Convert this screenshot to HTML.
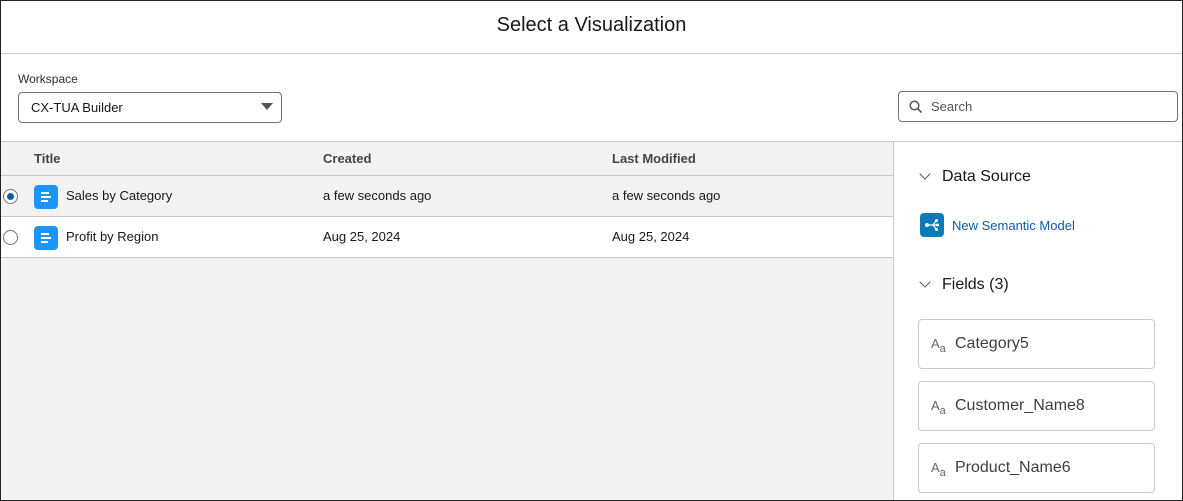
<!DOCTYPE html>
<html><head><style>
*{box-sizing:border-box;margin:0;padding:0}
body{width:1183px;height:501px;font-family:"Liberation Sans",sans-serif;color:#181818;background:#fff;position:relative;overflow:hidden}
.frame{position:absolute;inset:0;border:1px solid #222;}
.hdr{position:absolute;left:0;top:0;width:1183px;height:54px;border-bottom:1px solid #c9c9c9;text-align:center;font-size:20px;line-height:51px}
.lbl{position:absolute;left:18px;top:72px;font-size:12px;color:#2e2e2e}
.sel{position:absolute;left:18px;top:92px;width:264px;height:31px;border:1px solid #747474;border-radius:4px;font-size:13px;line-height:29px;padding-left:12px}
.sel:after{content:"";position:absolute;right:8px;top:10px;border-left:6px solid transparent;border-right:6px solid transparent;border-top:7px solid #555}
.srch{position:absolute;left:898px;top:91px;width:280px;height:31px;border:1px solid #747474;border-radius:4px;font-size:13px;line-height:29px;padding-left:32px;color:#555}
.left{position:absolute;left:1px;top:141px;width:893px;height:359px;background:#f3f3f3;border-top:1px solid #c9c9c9;border-right:1px solid #c9c9c9}
.right{position:absolute;left:894px;top:141px;width:288px;height:359px;border-top:1px solid #c9c9c9;background:#fff}
.th{position:absolute;top:0;height:34px;width:892px;border-bottom:1px solid #c9c9c9;font-size:13px;font-weight:bold;color:#444}
.th span{position:absolute;top:9px}
.row span{position:absolute;top:12px}
.row{position:absolute;left:0;width:892px;height:41px;border-bottom:1px solid #c9c9c9;font-size:13px}
.radio{position:absolute;left:2px;top:13px;width:15px;height:15px;border:1px solid #747474;border-radius:50%;background:#fff}
.ico{position:absolute;left:33px;top:9px;width:24px;height:24px;background:#1b96ff;border-radius:4px}
.ico i{position:absolute;left:7px;height:2px;background:#fff}
.sec{position:absolute;left:48px;font-size:16px}
.chev{position:absolute;left:27px;width:8px;height:8px;border-right:1.3px solid #555;border-bottom:1.3px solid #555;transform:rotate(45deg)}
.fld{position:absolute;left:24px;width:237px;height:50px;border:1px solid #c9c9c9;border-radius:4px;font-size:16px;color:#3e3e3e;line-height:48px;padding-left:36px}
.fld b{position:absolute;left:12px;top:0;font-weight:normal;font-size:13px;color:#666}
.fld b small{font-size:11px;position:relative;top:4px}
</style></head><body>
<div class="hdr">Select a Visualization</div>
<div class="lbl">Workspace</div>
<div class="sel">CX-TUA Builder</div>
<div class="srch"><svg style="position:absolute;left:10px;top:8px" width="14" height="14" viewBox="0 0 14 14"><circle cx="5.5" cy="5.5" r="4.3" fill="none" stroke="#555" stroke-width="1.5"/><path d="M8.7 8.7L12.5 12.5" stroke="#555" stroke-width="1.6"/></svg>Search</div>
<div class="left">
 <div class="th"><span style="left:33px">Title</span><span style="left:322px">Created</span><span style="left:611px">Last Modified</span></div>
 <div class="row" style="top:34px;background:#f3f3f3"><div class="radio"><div style="position:absolute;left:3px;top:3px;width:7px;height:7px;border-radius:50%;background:#0b5cab"></div></div><div class="ico"><i style="top:7px;width:8px"></i><i style="top:11px;width:10px"></i><i style="top:15px;width:7px"></i></div><span style="left:65px">Sales by Category</span><span style="left:322px">a few seconds ago</span><span style="left:611px">a few seconds ago</span></div>
 <div class="row" style="top:75px;background:#fff"><div class="radio"></div><div class="ico"><i style="top:7px;width:8px"></i><i style="top:11px;width:10px"></i><i style="top:15px;width:7px"></i></div><span style="left:65px">Profit by Region</span><span style="left:322px">Aug 25, 2024</span><span style="left:611px">Aug 25, 2024</span></div>
</div>
<div class="right">
 <div class="chev" style="top:28px"></div><div class="sec" style="top:26px">Data Source</div>
 <div style="position:absolute;left:26px;top:71px;width:24px;height:24px;background:#0b7ab8;border-radius:4px"><svg width="24" height="24" viewBox="0 0 24 24"><circle cx="7" cy="12" r="2" fill="#fff"/><path d="M9 12H13M13 12L16 8M13 12L16 16M13 12H17" stroke="#fff" stroke-width="1.2" fill="none"/><circle cx="16.5" cy="7.5" r="1.5" fill="#fff"/><circle cx="17.5" cy="12" r="1.5" fill="#fff"/><circle cx="16.5" cy="16.5" r="1.5" fill="#fff"/></svg></div>
 <div style="position:absolute;left:58px;top:76px;font-size:13px;color:#0b5cab">New Semantic Model</div>
 <div class="chev" style="top:136px"></div><div class="sec" style="top:134px">Fields (3)</div>
 <div class="fld" style="top:177px"><b>A<small>a</small></b>Category5</div>
 <div class="fld" style="top:239px"><b>A<small>a</small></b>Customer_Name8</div>
 <div class="fld" style="top:301px"><b>A<small>a</small></b>Product_Name6</div>
</div>
<div class="frame"></div>
</body></html>
